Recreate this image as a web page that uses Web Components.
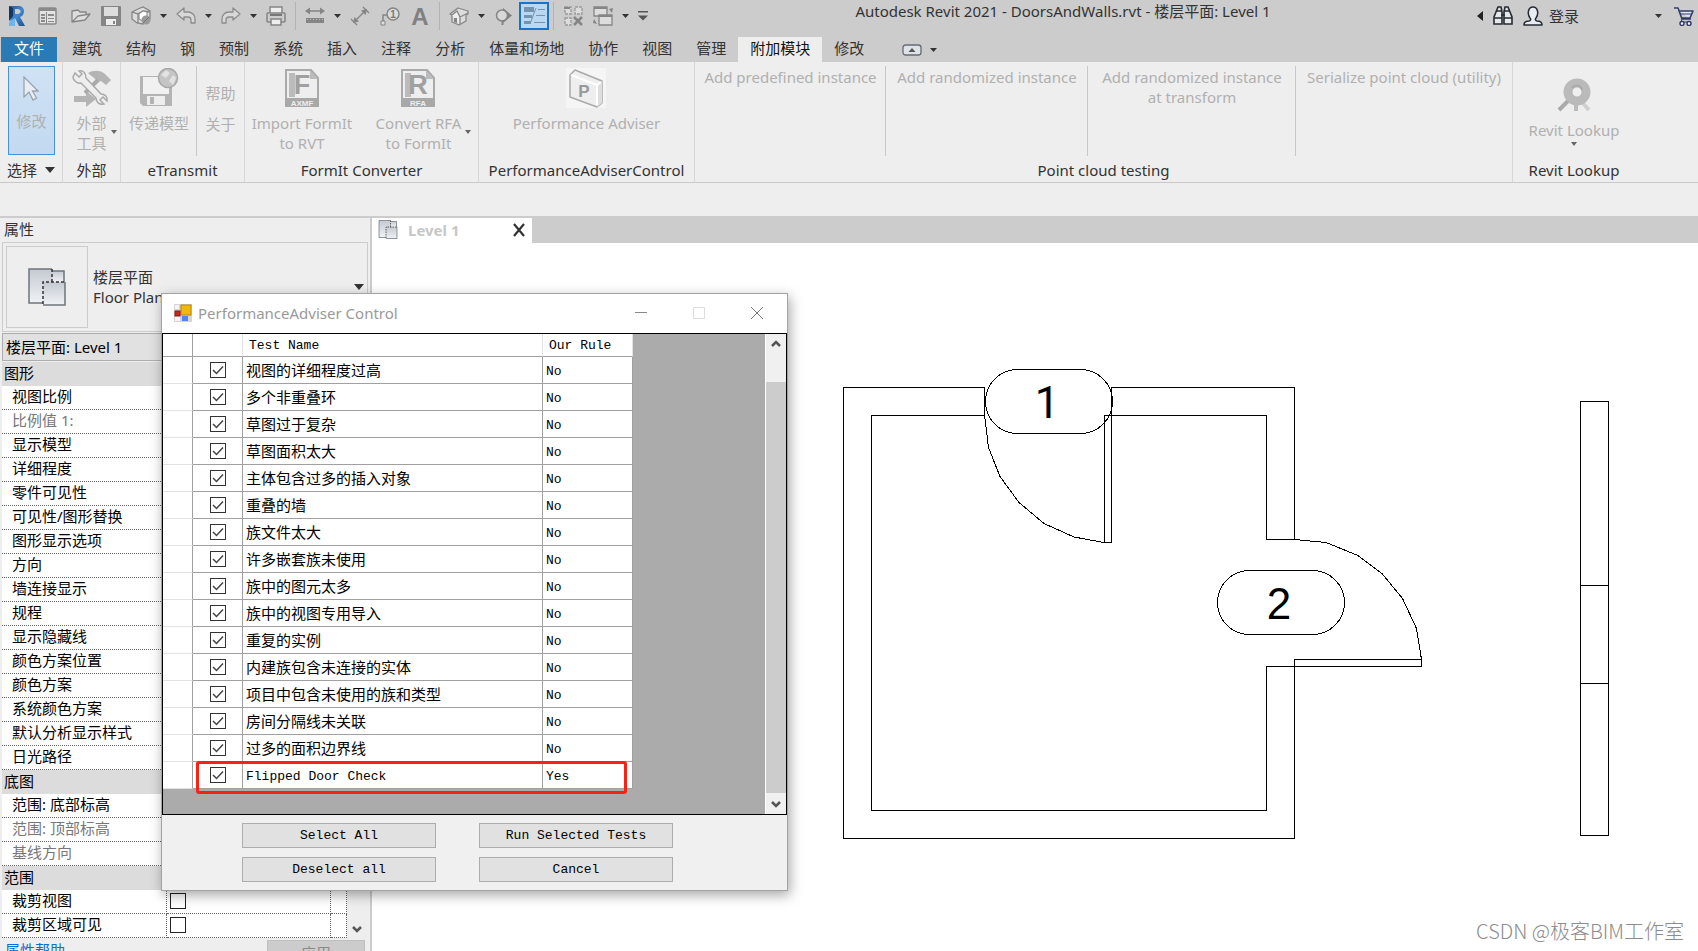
<!DOCTYPE html>
<html lang="zh-CN">
<head>
<meta charset="utf-8">
<title>Autodesk Revit 2021</title>
<style>
html, body { margin: 0; height: 100%; }
body { overflow: hidden; background: #eee; font: 15px/20px "Noto Sans", "Noto Sans CJK SC", sans-serif; color: #333; }
</style>
</head>
<body>
<revit-app></revit-app>
<script>
const BASE = `<style>
*{box-sizing:border-box}
button{font:inherit;color:inherit;background:none;border:0;padding:0;margin:0}
svg{display:block}
</style>`;
class Base extends HTMLElement {
  constructor() {
    super();
    this.attachShadow({ mode: 'open' });
  }
  connectedCallback() { this.shadowRoot.innerHTML = BASE + this.render(); }
}

const TXT = 'font-family="Liberation Sans,sans-serif" font-weight="700" text-anchor="middle"';
const FILE = (letter, ext) => `<path fill="#eee" stroke="#aaa" stroke-width="2" d="M1 1h25l7 8v28H1z"/><path fill="#bbb" d="M25 1v9h8zM4 4h6v24H4z"/><text x="17" y="25" font-size="27" fill="#a0a0a0" ${TXT}>${letter}</text><path fill="#a8a8a8" d="M0 29h34v9H0z"/><text x="17" y="37" font-size="8" fill="#eee" ${TXT}>${ext}</text>`;
const ICONS = {
  r: [20, 22, `<defs><linearGradient id="g" x1="0" y1="0" x2="1" y2="1"><stop offset="0" stop-color="#2b5797"/><stop offset=".5" stop-color="#3f87d0"/><stop offset="1" stop-color="#1d4f86"/></linearGradient></defs><path fill="url(#g)" d="M2 1h9c4 0 6 2 6 5.500 0 3-2 5-4 5.500l5 9h-6l-4-8v8H2l2-9z"/><path fill="#ccc" d="M8 4h2.500c2 0 3 1 3 2.500S12.500 9 10.500 9H8z"/><path fill="#17375f" d="M2 1l4 2v8l-4 5z"/><path fill="#6db4ec" d="M3 16l5-3v8H2z"/>`],
  list: [20, 20, `<rect x="2" y="2" width="17" height="16" rx="1" fill="#e3e3e3" stroke="#8a8a8a" stroke-width="1.500"/><path fill="#8a8a8a" d="M2 2h17v3H2zM4 8h4v2H4zM4 11h4v2H4zM4 14h4v2H4zM11 8h6v2h-6zM11 12h6v1h-6zM11 15h6v1h-6z"/><path stroke="#8a8a8a" d="M9.500 6v12"/>`],
  open: [20, 20, `<path fill="#dedede" stroke="#858585" stroke-width="1.300" stroke-linejoin="round" d="M1 16V5l6-1 2 2h6v3M1 16l6-6 12-2-5 6z"/>`],
  save: [20, 20, `<rect x="0" y="0" width="20" height="20" rx="1" fill="#858585"/><path fill="#ddd" d="M3 1h14v9H3z"/><path fill="#eee" d="M5 13h10v6H5z"/><path fill="#858585" d="M12 15h2v3h-2z"/>`],
  cube: [20, 20, `<path fill="#ddd" stroke="#858585" stroke-width="1.300" d="M1 6l6-3 5-2 7 4v8l-7 5-6-1-5-4zM1 6l6 2 5-3 7 1M7 8v9"/><path fill="#fff" stroke="#858585" d="M8 8l4-3 4 1v6l-4 3-4-2z"/><circle cx="15" cy="14" r="4.500" fill="#999"/><path stroke="#777" fill="none" d="M12 17l6-6"/>`],
  undo: [20, 20, `<path fill="#d8d8d8" stroke="#8c8c8c" stroke-width="1.300" stroke-linejoin="round" d="M1 8l7-6v4h4c4 0 7 3 7 7v4h-4v-3c0-2-1-3-3-3H8v3z"/>`],
  redo: [20, 20, `<path fill="#d8d8d8" stroke="#8c8c8c" stroke-width="1.300" stroke-linejoin="round" d="M19 8l-7-6v4H8c-4 0-7 3-7 7v4h4v-3c0-2 1-3 3-3h4v3z"/>`],
  print: [20, 20, `<path fill="#eee" stroke="#858585" stroke-width="1.500" d="M4 8V1h12v7"/><rect x="1" y="7" width="18" height="9" rx="1" fill="#ccc" stroke="#858585" stroke-width="1.500"/><path fill="#777" d="M4 8h12v2H4z"/><path fill="#eee" stroke="#858585" stroke-width="1.500" d="M5 13h10v6H5z"/>`],
  measure: [20, 20, `<path fill="none" stroke="#858585" stroke-width="1.500" d="M2 5h16"/><path fill="#858585" d="M0 5l5-3.500v7zM20 5l-5-3.500v7zM1 12h18v5H1z"/><path stroke="#bbb" stroke-dasharray="1 2" d="M2 13.500h17"/>`],
  dim: [20, 20, `<path stroke="#858585" stroke-width="1.400" d="M4 16L16 4M1 13l6 6M13 1l6 6"/><path fill="#858585" d="M3 17l1.500-6 4.500 4.500zM17 3l-1.500 6L11 4.500z"/>`],
  tag: [20, 20, `<circle cx="13" cy="8" r="6" fill="#ddd" stroke="#858585" stroke-width="1.500"/><path fill="none" stroke="#858585" stroke-width="1.500" d="M7 9H3v7"/><text x="13" y="12" font-size="10" fill="#777" ${TXT}>1</text><path fill="#ddd" stroke="#858585" d="M1 15h4v4H1z"/>`],
  a: [20, 20, `<text x="10" y="19" font-size="24" fill="#808080" ${TXT}>A</text>`],
  home: [20, 20, `<path fill="#ddd" stroke="#858585" stroke-width="1.300" stroke-linejoin="round" d="M1 8l8-6 10 3v3l-2 1v6l-7 4-7-3V9z"/><path fill="#eee" stroke="#858585" stroke-width="1.300" d="M3 9l5-4 3 6v8M11 11l8-4"/><path fill="#858585" d="M5 12h3v5l-3-1z"/>`],
  section: [20, 20, `<path fill="#808080" d="M9 2l9 7.500L9 17z"/><circle cx="8" cy="9.500" r="5.500" fill="#d8d8d8" stroke="#858585" stroke-width="1.500"/><path stroke="#858585" stroke-width="2" d="M8.500 15v4"/>`],
  thin: [22, 20, `<path fill="#7792ae" d="M1 1h10v5H1zM1 9h8v3H1zM1 15h7v3H1zM15 3h7v1h-7zM13 9h9v1h-9zM11 16h11v1H11z"/><path stroke="#7792ae" d="M13 2L7 18"/>`],
  closeh: [20, 20, `<g fill="#ddd" stroke="#999" stroke-width="1.300"><path d="M2 1h6v7H2zM2 12h6v7H2zM12 1h7v7h-7z" stroke-dasharray="3 1"/></g><path fill="#858585" d="M1 1h6v2H1z"/><path stroke="#858585" stroke-width="2.500" d="M11 11l8 8M19 11l-8 8"/>`],
  switch: [20, 20, `<g fill="#ddd" stroke="#858585" stroke-width="1.300"><path d="M1 1h13v9H1zM6 9h13v10H6z"/></g><path fill="#858585" d="M1 1h13v2H1zM6 9h13v2H6zM16 3l4-1-1 5zM4 18l-4-1 1-4z"/>`],
  tri: [7, 20, `<path fill="#333" d="M0 8h7l-3.500 4z"/>`],
  tris: [6, 4, `<path fill="#666" d="M0 0h6L3 4z"/>`],
  tril: [10, 6, `<path fill="#333" d="M0 0h10L5 6z"/>`],
  cust: [12, 20, `<path fill="#555" d="M1 5h10v1.500H1zM1 9.500h10l-5 5z"/>`],
  left: [6, 20, `<path fill="#222" d="M6 5v10L0 10z"/>`],
  bino: [20, 20, `<g fill="#e8e8e8" stroke="#252b33" stroke-width="1.600"><path d="M3 6l2-5h3l1 5v12H1v-7zM17 6l-2-5h-3l-1 5v12h8v-7z"/></g><path stroke="#252b33" stroke-width="1.600" d="M1 12h8M11 12h8M4 5h5M11 5h5M8 9h4"/>`],
  user: [20, 20, `<path fill="#e9edf1" stroke="#252b33" stroke-width="1.500" stroke-linejoin="round" d="M1 19c0-3 2-4 5-4 2-.5 2-2 1-3-3-4-2-11 3-11s6 7 3 11c-1 1-1 2.500 1 3 3 0 5 1 5 4z"/>`],
  cart: [20, 20, `<path fill="#e2e6f3" stroke="#333c66" stroke-width="1.600" stroke-linejoin="round" d="M0 2h4l4 11h9M5 5h14l-3 7H7.500"/><path stroke="#333c66" d="M6 8h12M8 13l-1 3h10"/><circle cx="8" cy="17.500" r="2" fill="#fff" stroke="#333c66" stroke-width="1.500"/><circle cx="15" cy="17.500" r="2" fill="#fff" stroke="#333c66" stroke-width="1.500"/>`],
  mini: [20, 14, `<rect x="1" y="2" width="18" height="10" rx="2.500" fill="#dfe2e8" stroke="#666b75" stroke-width="1.300"/><path fill="#555" d="M6.500 9L10 5l3.500 4z"/>`],
  cursor: [16, 26, `<path fill="#e8eef5" stroke="#9aa3ad" stroke-width="1.300" d="M1 1v20l5-5 4 8 3.500-2-4-7h5.500z"/>`],
  tools: [40, 38, `<path fill="#b4b4b4" d="M2 27h12v-5l10 8-10 8v-5H2zM16 4c6-3 12-3 17 1l6 6-5 5-5-4-3 1-4-4z"/><path stroke="#aaa" stroke-width="4" d="M26 11L13 24"/><path fill="#eee" stroke="#aaa" stroke-width="1.500" d="M3 3l4 4 3-3-3-3c4-1 7 2 7 7l15 16c4 0 7 3 6 7l-4-4-3 3 4 4c-5 1-8-2-8-6L9 13c-4 1-8-3-8-6z" transform="translate(0 1)"/>`],
  disk: [40, 40, `<path fill="#b4b4b4" d="M1 8h32v30H4l-3-3z"/><path fill="#f1f1f1" d="M4 9h26v17H4z"/><path fill="#eee" d="M8 28h18v9H8z"/><path fill="#b4b4b4" d="M11 29h4v7h-4z"/><circle cx="29" cy="10" r="9.500" fill="#c4c4c4" stroke="#a8a8a8" stroke-width="1.500"/><path fill="#e2e2e2" d="M22 7l5-5 4 3-4 5zM30 13l4-6 3 3-3 7z"/>`],
  f: [34, 38, FILE('F', 'AXMF')],
  rfa: [34, 38, FILE('R', 'RFA')],
  p: [40, 40, `<path fill="#f5f5f5" d="M0 0h40v40H0z"/><path fill="#eee" stroke="#aaa" stroke-width="1.500" stroke-linejoin="round" d="M4 7l5-5 27 11v22l-5 4L4 29z"/><path fill="#ddd" d="M31 16l5-3v22l-5 4z"/><path fill="none" stroke="#fff" stroke-width="2" d="M5 7l26 10 4-3M31 17v20"/><text x="18" y="29" font-size="17" fill="#999" ${TXT}>P</text>`],
  lookup: [34, 34, `<path stroke="#aaa" stroke-width="4" d="M11 23L2 32"/><path stroke="#bbb" stroke-width="4" d="M19 24v9"/><path stroke="#d0d0d0" stroke-width="4" d="M24 23l8 9"/><circle cx="20" cy="14" r="9" fill="#f0f0f0" stroke="#bababa" stroke-width="9"/><path fill="none" stroke="#a6a6a6" stroke-width="1.500" d="M15 10c3-4 9-3 10 2"/>`],
  plan: [38, 38, `<defs><linearGradient id="g" x1="0" y1="0" x2="0" y2="1"><stop offset="0" stop-color="#c4cad2"/><stop offset="1" stop-color="#f0f2f5"/></linearGradient></defs><path fill="url(#g)" d="M1 1h23v34H1z"/><path fill="url(#g)" d="M24 3h12v11H24z"/><path fill="url(#g)" d="M15 14h22v23H15z"/><path fill="none" stroke="#6d747e" stroke-width="1.500" d="M24 1H1v34h14M24 3h12v11M37 14v23H15"/><path fill="none" stroke="#333" stroke-width="1.500" stroke-dasharray="3 2" d="M24 1v13M15 36V14h22"/>`],
  form: [18, 18, `<rect x="0" y="0" width="18" height="18" fill="#d5d5d5"/><rect x="1" y="1" width="4" height="4" fill="#f5f5f5"/><rect x="1" y="12" width="5" height="5" fill="#f5f5f5"/><rect x="7" y="1" width="10" height="10" fill="#f0b90d" stroke="#b88906"/><rect x="1" y="7" width="5" height="5" fill="#c6261b" stroke="#8e1a12"/><rect x="8" y="12" width="6" height="5" fill="#4a8af0"/>`],
  min: [12, 12, `<path stroke="#888" d="M0 5.500h12"/>`],
  max: [12, 12, `<path fill="none" stroke="#ddd" d="M.5.500h11v11H.5z"/>`],
  x: [12, 12, `<path stroke="#777" d="M0 0l12 12M12 0L0 12"/>`],
  xb: [12, 14, `<path stroke="#333" stroke-width="2.200" d="M1 1l10 12M11 1L1 13"/>`],
  up: [10, 8, `<path fill="none" stroke="#555" stroke-width="2.500" d="M1 6l4-4 4 4"/>`],
  down: [10, 8, `<path fill="none" stroke="#555" stroke-width="2.500" d="M1 2l4 4 4-4"/>`],
};
class UiIcon extends Base {
  render() {
    const [w, h, body] = ICONS[this.getAttribute('name')];
    const W = this.getAttribute('w') || w, H = this.getAttribute('h') || h;
    return `<style>:host{display:block;flex:none}</style><svg width="${W}" height="${H}" viewBox="0 0 ${w} ${h}" fill="none" aria-hidden="true">${body}</svg>`;
  }
}
customElements.define('ui-icon', UiIcon);

class TitleBar extends Base {
  render() {
    const items = [['r', 'Revit'], ['list', '属性'], 'g', ['open', '打开'], ['save', '保存'], ['cube', '同步'], 'v', ['undo', '放弃'], 'v', ['redo', '重做'], 'v', ['print', '打印'], '|', ['measure', '测量'], 'v', ['dim', '尺寸标注'], ['tag', '标记'], ['a', '文字'], '|', ['home', '三维视图'], 'v', ['section', '剖面'], ['thin', '细线'], '|', ['closeh', '关闭非活动视图'], ['switch', '切换窗口'], 'v', ['cust', '自定义']];
    return `<style>
:host{display:flex;height:37px;background:#ccc;align-items:flex-start}
.q{display:flex;align-items:center;gap:8px;height:32px;padding-left:6px}
.b{width:22px;height:26px;display:grid;place-items:center}
.b.n{width:7px}
.b.on{width:30px;margin:0 -4px;height:28px;border:2px solid #1a72c9;background:#b9d9f3}
.b.c{width:12px}
.s{width:1px;height:28px;background:#b3b3b3}
.g{width:0;margin-right:-4px}
h1{flex:1;margin:0;font:inherit;line-height:22px;text-align:center;white-space:nowrap}
.r{display:flex;align-items:center;height:32px;padding-right:4px}
.r button{display:flex;align-items:center;gap:6px}
.bi{margin:0 10px}.lo{margin-right:76px}.ca{margin-left:12px}
</style><div class="q">${items.map(i => i === '|' ? '<span class="s"></span>' : i === 'g' ? '<span class="g"></span>' : i === 'v' ? '<button class="b n" aria-label="更多"><ui-icon name="tri"></ui-icon></button>' : `<button class="b${i[0] === 'thin' ? ' on' : i[0] === 'cust' ? ' c' : ''}" aria-label="${i[1]}"><ui-icon name="${i[0]}"></ui-icon></button>`).join('')}</div>
<h1>Autodesk Revit 2021 - DoorsAndWalls.rvt - 楼层平面: Level 1</h1>
<div class="r"><button aria-label="展开"><ui-icon name="left"></ui-icon></button><button class="bi" aria-label="搜索"><ui-icon name="bino"></ui-icon></button><button class="lo"><ui-icon name="user"></ui-icon>登录</button><button aria-label="账户"><ui-icon name="tri"></ui-icon></button><button class="ca" aria-label="商店"><ui-icon name="cart"></ui-icon></button></div>`;
  }
}
customElements.define('title-bar', TitleBar);

class RibbonTabs extends Base {
  render() {
    const t = ['建筑', '结构', '钢', '预制', '系统', '插入', '注释', '分析', '体量和场地', '协作', '视图', '管理', '附加模块', '修改'];
    return `<style>
:host{display:flex;height:25px;background:#ccc;padding-left:1px}
button{padding:0 12px;height:25px;line-height:22px;white-space:nowrap;display:flex}
.f{background:#2a7ab5;color:#fff;padding:0 13px;margin-right:3px}
.on{background:#eee;color:#111}
.m{padding:0 6px 0 26px;margin-left:0;align-items:center;gap:8px}
</style><button class="f">文件</button>${t.map(x => `<button${x === '附加模块' ? ' class="on"' : ''}>${x}</button>`).join('')}<button class="m" aria-label="最小化功能区"><ui-icon name="mini"></ui-icon><ui-icon name="tri"></ui-icon></button>`;
  }
}
customElements.define('ribbon-tabs', RibbonTabs);

class RibbonPanel extends Base {
  render() {
    return `<style>
:host{display:flex;flex-direction:column;flex:none;border-right:1px solid #d6d6d6}
.b{flex:1;display:flex}
.l{height:24px;line-height:24px;display:flex;gap:8px;align-items:center;justify-content:center;white-space:nowrap}
</style><div class="b"><slot></slot></div><div class="l">${this.getAttribute('label')}<slot name="arrow"></slot></div>`;
  }
}
customElements.define('ribbon-panel', RibbonPanel);

class RibbonButton extends Base {
  render() {
    const ic = this.getAttribute('icon'), ar = this.getAttribute('arrow');
    return `<style>
:host{display:flex;flex:1;justify-content:center;color:#b0b0b0}
:host([sep]){border-right:0;background:linear-gradient(#c8c8c8,#c8c8c8) right 4px/1px 90px no-repeat}
:host([on]){margin:4px 7px 3px 8px;background:linear-gradient(#d0e2f5,#c2d9f0);border:1px solid #4a90d6}
:host([on]) .i{height:36px}
:host([on]) button{padding-top:4px}
button{padding-top:5px;display:flex;flex-direction:column;align-items:center}
.i{height:42px;display:grid;place-items:center;margin-bottom:4px}
:host([low]) button{padding-top:12px}
.t{position:relative;white-space:nowrap;text-align:center}
.right{position:absolute;right:-10px;top:17px}
.below{margin-top:2px}
</style><button disabled>${ic ? `<span class="i"><ui-icon name="${ic}"></ui-icon></span>` : ''}<span class="t"><slot></slot>${ar === 'right' ? '<ui-icon class="right" name="tris"></ui-icon>' : ''}</span>${ar === 'below' ? '<ui-icon class="below" name="tris"></ui-icon>' : ''}</button>`;
  }
}
customElements.define('ribbon-button', RibbonButton);

class RibbonBar extends Base {
  render() {
    return `<style>
:host{display:flex;height:121px;background:#eee;border-bottom:1px solid #c8c8c8}
.p1{width:63px}.p2{width:58px}.p3{width:124px}.p4{width:234px}.p5{width:216px}.p6{width:818px}.p7{width:122px;border:0}
.et{flex:0 0 76px}.st{flex:1}.st ribbon-button{flex:none}
.st{display:flex;flex-direction:column;padding-top:16px;gap:6px}
.im{flex:0 0 114px}.a{flex:0 0 191px}.b{flex:0 0 202px}.c{flex:0 0 208px}
</style>
<ribbon-panel class="p1" label="选择"><ribbon-button on icon="cursor">修改</ribbon-button><ui-icon slot="arrow" name="tril"></ui-icon></ribbon-panel>
<ribbon-panel class="p2" label="外部"><ribbon-button icon="tools" arrow="right">外部<br>工具</ribbon-button></ribbon-panel>
<ribbon-panel class="p3" label="eTransmit"><ribbon-button class="et" sep icon="disk">传递模型</ribbon-button><div class="st"><ribbon-button>帮助</ribbon-button><ribbon-button>关于</ribbon-button></div></ribbon-panel>
<ribbon-panel class="p4" label="FormIt Converter"><ribbon-button class="im" icon="f">Import FormIt<br>to RVT</ribbon-button><ribbon-button icon="rfa" arrow="right">Convert RFA<br>to FormIt</ribbon-button></ribbon-panel>
<ribbon-panel class="p5" label="PerformanceAdviserControl"><ribbon-button icon="p">Performance Adviser</ribbon-button></ribbon-panel>
<ribbon-panel class="p6" label="Point cloud testing"><ribbon-button class="a" sep>Add predefined instance</ribbon-button><ribbon-button class="b" sep>Add randomized instance</ribbon-button><ribbon-button class="c" sep>Add randomized instance<br>at transform</ribbon-button><ribbon-button>Serialize point cloud (utility)</ribbon-button></ribbon-panel>
<ribbon-panel class="p7" label="Revit Lookup"><ribbon-button low icon="lookup" arrow="below">Revit Lookup</ribbon-button></ribbon-panel>`;
  }
}
customElements.define('ribbon-bar', RibbonBar);

class PropertiesPanel extends Base {
  render() {
    const rows = ['#图形', '视图比例', '-比例值 1:', '显示模型', '详细程度', '零件可见性', '可见性/图形替换', '图形显示选项', '方向', '墙连接显示', '规程', '显示隐藏线', '颜色方案位置', '颜色方案', '系统颜色方案', '默认分析显示样式', '日光路径', '#底图', '范围: 底部标高', '-范围: 顶部标高', '-基线方向', '#范围', '+裁剪视图', '+裁剪区域可见'];
    return `<style>
:host{display:block;width:372px;flex:none;border-right:2px solid #ccc;border-top:2px solid #ccc;padding:0 2px}
h2{margin:0;font:inherit;line-height:22px;padding:0 0 2px 2px}
.type{display:flex;width:366px;height:90px;border:1px solid #ccc;padding:3px;align-items:center;justify-content:flex-start;text-align:left}
.th{width:82px;height:82px;border:1px solid #ccc;display:grid;place-items:center;margin-right:5px}
.nm{flex:1}
.inst{display:block;width:366px;height:28px;margin-top:1px;border:1px solid #adadad;background:#e1e1e1;text-align:left;padding-left:3px;color:#000}
.w{display:flex;margin-top:1px}
table{width:345px;table-layout:fixed;border-spacing:0;background:#fff;color:#000}
td,th{height:24px;padding:0 0 3px 10px;line-height:20px;font-weight:400;text-align:left;border-bottom:1px dotted #666;white-space:nowrap}
td{border-right:1px dotted #666;padding:0 0 1px 3px}
tbody th{border-right:1px dotted #666}
.h th{background:#dcdcdc;padding-left:2px;border:0}
.d th{color:#777}
input{appearance:none;display:block;width:16px;height:16px;margin:0;border:1px solid #222;background:#fff}
.sb{flex:1;background:#eee;display:flex;align-items:flex-end;justify-content:center;padding:0 2px 5px 0}
.ft{display:flex;justify-content:space-between;padding:2px 3px 0 3px;height:30px}
a{color:#0b6fd0;text-decoration:none}
.ft button{width:98px;height:26px;border:1px solid #bfbfbf;background:#ccc;color:#8a8a8a;line-height:18px}
</style><h2>属性</h2>
<button class="type"><span class="th"><ui-icon name="plan"></ui-icon></span><span class="nm">楼层平面<br>Floor Plan</span><ui-icon name="tril"></ui-icon></button>
<button class="inst">楼层平面: Level 1</button>
<div class="w"><table><colgroup><col style="width:165px"><col style="width:164px"><col style="width:16px"></colgroup><tbody>${rows.map((r, i) => {
      const k = r[0], t = '#-+'.includes(k) ? r.slice(1) : r;
      if (k === '#') return `<tr class="h"><th colspan="3">${t}</th></tr>`;
      return `<tr${k === '-' ? ' class="d"' : ''}><th scope="row">${k === '+' ? `<label for="p${i}">${t}</label>` : t}</th><td>${k === '+' ? `<input type="checkbox" id="p${i}">` : ''}</td><td></td></tr>`;
    }).join('')}</tbody></table><div class="sb"><ui-icon name="down"></ui-icon></div></div>
<div class="ft"><a href="#help">属性帮助</a><button disabled>应用</button></div>`;
  }
}
customElements.define('properties-panel', PropertiesPanel);

class DrawingView extends Base {
  render() {
    return `<style>
:host{display:flex;flex-direction:column;flex:1;min-width:0;position:relative;background:#fff}
.tabs{flex:none;height:27px;background:#ccc;padding-top:2px;display:flex}
.tab{width:160px;background:#fff;display:flex;align-items:center;padding:0 7px 2px 6px;font-weight:700;color:#c6c6c6}
.tab span{flex:1;margin-left:10px}
.cv{flex:1;min-height:0}
.cv svg{width:100%;height:100%}
.wm{position:absolute;right:14px;bottom:6px;font:300 20px/28px "Noto Sans CJK SC",sans-serif;color:#8c8c8c}
</style><div class="tabs"><div class="tab"><ui-icon name="plan" w="20" h="19"></ui-icon><span>Level 1</span><button aria-label="关闭"><ui-icon name="xb"></ui-icon></button></div></div>
<div class="cv"><svg viewBox="372 243 1326 708" preserveAspectRatio="xMinYMin meet" fill="none" stroke="#000" role="img" aria-label="Level 1">
<g shape-rendering="crispEdges">
<path d="M985 387.500H843.500V838.500H1294.500V659.500H1421.500V666.500H1266.500V810.500H871.500V415.500H984.500V387.500"/>
<path d="M1111.500 542V387.500H1294.500V539.500H1266.500V415.500H1104.500V542.500H1111.500"/>
<path d="M1580.500 401.500H1608.500V835.500H1580.500zM1580.500 585.500H1608.500M1580.500 683.500H1608.500"/>
<path d="M984.500 415L988.500 447.500 1000 476.500 1019 502.500 1044 523.500 1074 537 1104 542.500"/>
<path d="M1294.500 539.500L1326 542.500 1358 555.500 1382 573.500 1402.500 598.500 1416.500 628.500 1421.500 659.500"/>
<rect x="985.500" y="369.500" width="127" height="64" rx="32"/>
<rect x="1217.500" y="570.500" width="127" height="64" rx="32"/>
</g>
<g fill="#000" stroke="none" font-size="44" text-anchor="middle"><text x="1047" y="418" font-family="Roboto, sans-serif">1</text><text x="1279" y="619" font-family="Liberation Sans, sans-serif">2</text></g>
</svg></div><div class="wm">CSDN @极客BIM工作室</div>`;
  }
}
customElements.define('drawing-view', DrawingView);

class AdviserDialog extends Base {
  render() {
    const n = ['视图的详细程度过高', '多个非重叠环', '草图过于复杂', '草图面积太大', '主体包含过多的插入对象', '重叠的墙', '族文件太大', '许多嵌套族未使用', '族中的图元太多', '族中的视图专用导入', '重复的实例', '内建族包含未连接的实体', '项目中包含未使用的族和类型', '房间分隔线未关联', '过多的面积边界线', 'Flipped Door Check'];
    return `<style>
:host{display:block;width:627px;background:#f0f0f0;border:1px solid #a3a3a3;box-shadow:2px 4px 12px rgba(0,0,0,.35)}
header{display:flex;align-items:center;height:39px;background:#fff;color:#999;padding:0 24px 2px 12px}
header span{flex:1;margin-left:6px}
header div{display:flex;gap:46px}
.grid{display:flex;height:482px;border:1px solid #000;background:#ababab;position:relative}
table{width:470px;table-layout:fixed;border-spacing:0;background:#fff;color:#000;align-self:flex-start;font:13px/20px "Liberation Mono","Noto Sans CJK SC",monospace}
td,th{padding:3px 0 0 3px;border-right:1px solid #a0a0a0;border-bottom:1px solid #a0a0a0;text-align:left;font-weight:400;white-space:nowrap}
td{height:27px}
.z{font:15px/20px "Noto Sans CJK SC",sans-serif;padding-top:0}
.c{padding:0}
thead th{height:23px;padding:2px 0 0 6px;line-height:18px;border-right-color:#e3e3e3}
thead th:first-child{border-right-color:#a0a0a0}
tbody td:first-child{border-bottom-color:#e3e3e3}
input{appearance:none;display:block;width:16px;height:16px;margin:0 auto;border:1px solid #333}
input:checked{background:url("data:image/svg+xml,%3Csvg xmlns='http://www.w3.org/2000/svg' viewBox='0 0 14 14'%3E%3Cpath d='M2 7l3.500 3.500L12 3.500' fill='none' stroke='%23444' stroke-width='1.500'/%3E%3C/svg%3E")}
.sb{margin-left:auto;width:21px;background:#ccc;border-left:1px solid #fff;display:flex;flex-direction:column;justify-content:space-between}
.sb button{display:grid;justify-items:center;background:#f0f0f0;height:21px;align-items:center}
.sb .u{height:48px;align-items:start;padding-top:6px}
.red{position:absolute;left:33px;top:427px;width:431px;height:33px;border:3px solid #ff2012;border-radius:3px;pointer-events:none}
footer{display:grid;grid-template-columns:194px 194px;column-gap:43px;row-gap:9px;padding:8px 0 8px 80px;font:13px/20px "Liberation Mono",monospace;color:#000}
footer button{height:25px;background:#e1e1e1;border:1px solid #adadad}
</style><header><ui-icon name="form"></ui-icon><span>PerformanceAdviser Control</span><div><button aria-label="最小化"><ui-icon name="min"></ui-icon></button><button aria-label="最大化"><ui-icon name="max"></ui-icon></button><button aria-label="关闭"><ui-icon name="x"></ui-icon></button></div></header>
<div class="grid"><table><colgroup><col style="width:30px"><col style="width:50px"><col style="width:300px"><col style="width:90px"></colgroup><thead><tr><th></th><th></th><th>Test Name</th><th>Our Rule</th></tr></thead><tbody>${n.map((t, i) => `<tr><td></td><td class="c"><input type="checkbox" checked id="t${i}"></td><td${i < 15 ? ' class="z"' : ''}><label for="t${i}">${t}</label></td><td>${i < 15 ? 'No' : 'Yes'}</td></tr>`).join('')}</tbody></table>
<div class="sb"><button class="u" aria-label="向上"><ui-icon name="up"></ui-icon></button><button aria-label="向下"><ui-icon name="down"></ui-icon></button></div><div class="red"></div></div>
<footer><button>Select All</button><button>Run Selected Tests</button><button>Deselect all</button><button>Cancel</button></footer>`;
  }
}
customElements.define('adviser-dialog', AdviserDialog);

class RevitApp extends Base {
  render() {
    return `<style>
:host{display:flex;flex-direction:column;height:100vh;overflow:hidden;position:relative}
title-bar,ribbon-tabs,ribbon-bar,.opt{flex:none}
.opt{height:33px;background:#eee}
main{flex:1;min-height:0;display:flex}
adviser-dialog{position:absolute;left:161px;top:293px}
</style><title-bar></title-bar><ribbon-tabs></ribbon-tabs><ribbon-bar></ribbon-bar><div class="opt"></div>
<main><properties-panel></properties-panel><drawing-view></drawing-view></main><adviser-dialog role="dialog"></adviser-dialog>`;
  }
}
customElements.define('revit-app', RevitApp);
</script>
</body>
</html>
